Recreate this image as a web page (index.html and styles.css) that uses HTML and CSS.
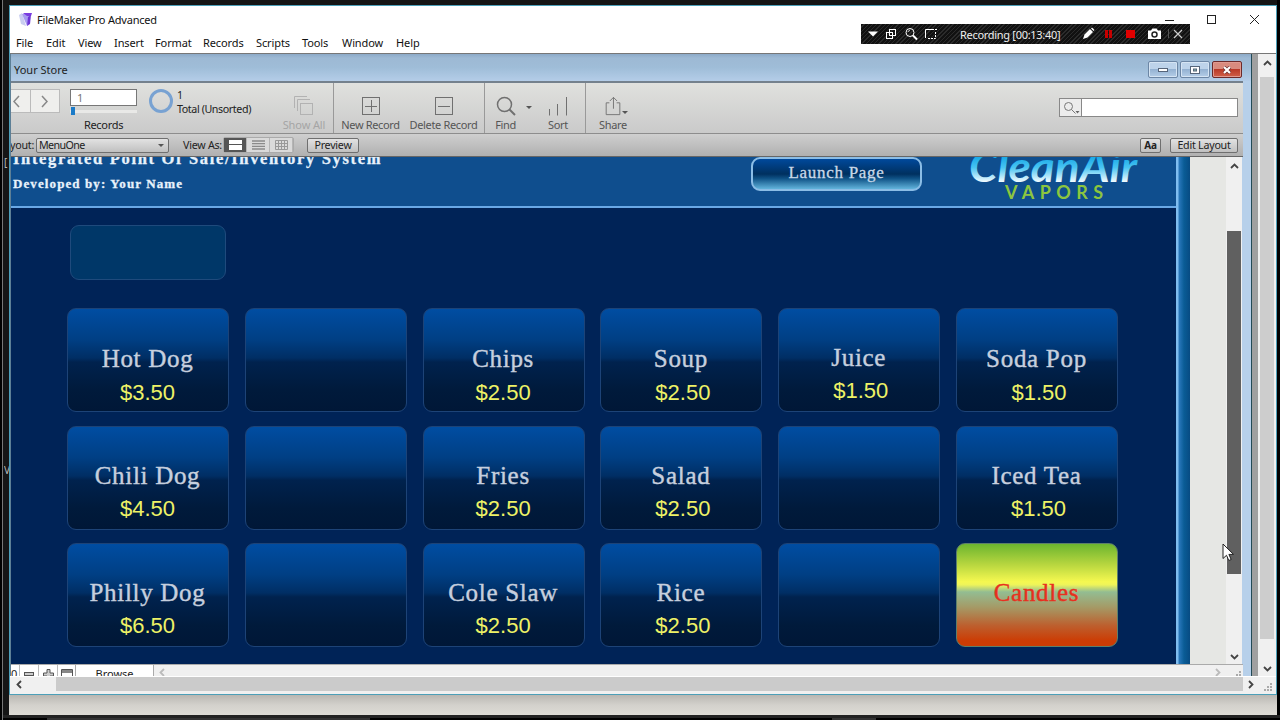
FILE: index.html
```html
<!doctype html>
<html lang="en">
<head>
    <meta charset="utf-8">
    <meta name="viewport" content="width=device-width, initial-scale=1">
    <title>FileMaker Pro Advanced</title>
    <link rel="stylesheet" href="styles.css">
</head>
<body>
    <div class="edge-mark">[</div>
    <div class="edge-mark edge-mark-low">V</div>

    <div class="app">
        <div class="app-title">
            <svg width="15" height="15" viewBox="0 0 15 15">
                <path d="M1 3l3-2 4 13-5-2z" fill="#c9cdf0"/>
                <path d="M4 2l9-1-4 13z" fill="#a79af0"/>
                <path d="M5 1l9 0-1 3-4 0z" fill="#7a3be0"/>
                <path d="M13 3l-1 9-3 2 1-9z" fill="#6b35d6"/>
            </svg>
            <span class="app-name">FileMaker Pro Advanced</span>
            <svg class="window-buttons" width="92" height="12" viewBox="0 0 92 12" fill="none" stroke="#222">
                <path d="M1 6.500h9"/>
                <rect x="43.500" y="1.500" width="8" height="8"/>
                <path d="M86 1l9 9M95 1l-9 9"/>
            </svg>
        </div>
        <div class="menu-bar">
            <span>File</span><span>Edit</span><span>View</span><span>Insert</span><span>Format</span><span>Records</span><span>Scripts</span><span>Tools</span><span>Window</span><span>Help</span>
        </div>

        <div class="workspace">
            <div class="child">
                <div class="child-title">
                    <span>Your Store</span>
                    <div class="child-buttons">
                        <div class="child-btn"><svg width="10" height="4"><rect x=".5" y=".5" width="9" height="3" fill="#fff" stroke="#56657a"/></svg></div>
                        <div class="child-btn"><svg width="10" height="8"><rect x=".5" y=".5" width="9" height="7" fill="#fff" stroke="#56657a"/><rect x="3.500" y="3" width="3" height="2" fill="#8ba" stroke="#56657a"/></svg></div>
                        <div class="child-btn child-close"><svg width="10" height="8" viewBox="0 0 10 8"><path d="M2 1l6 6M8 1l-6 6" stroke="#6d3030" stroke-width="3.600"/><path d="M2 1l6 6M8 1l-6 6" stroke="#fff" stroke-width="2.200"/></svg></div>
                    </div>
                </div>

                <div class="client">
                    <div class="toolbar">
                        <div class="nav">
                            <div class="nav-prev"><svg width="7" height="13" viewBox="0 0 7 13"><path d="M6 1L1 6.500l5 5.500"/></svg></div>
                            <div class="nav-next"><svg width="7" height="13" viewBox="0 0 7 13"><path d="M1 1l5 5.500L1 12"/></svg></div>
                        </div>
                        <div class="records">
                            <div class="record-no">1</div>
                            <div class="slider"><div class="slider-thumb"></div></div>
                            <span>Records</span>
                        </div>
                        <div class="ring"></div>
                        <div class="total">1<br>Total (Unsorted)</div>
                        <div class="tool tool-showall disabled">
                            <svg width="20" height="20" viewBox="0 0 20 20"><path d="M.5 12V.5H13M3.500 15V3.500H16"/><rect x="6.500" y="7.500" width="12" height="11"/></svg>
                            <span>Show All</span>
                        </div>
                        <div class="tool tool-new">
                            <svg width="20" height="20" viewBox="0 0 20 20"><rect x="1.500" y="1.500" width="17" height="17"/><path d="M4 10.500h12M10.500 4v12"/></svg>
                            <span>New Record</span>
                        </div>
                        <div class="tool tool-delete">
                            <svg width="20" height="20" viewBox="0 0 20 20"><rect x="1.500" y="1.500" width="17" height="17"/><path d="M4 10.500h12"/></svg>
                            <span>Delete Record</span>
                        </div>
                        <div class="tool tool-find">
                            <svg width="20" height="20" viewBox="0 0 20 20"><circle cx="8.500" cy="8.500" r="7" stroke-width="1.500"/><path d="M13.500 13.500l5.500 5.500" stroke-width="2"/></svg>
                            <span>Find</span>
                            <i class="drop"></i>
                        </div>
                        <div class="tool tool-sort">
                            <svg width="20" height="20" viewBox="0 0 20 20"><path d="M1.500 13v6.500M9.500 8v11.500M18.500 1v18.500"/></svg>
                            <span>Sort</span>
                        </div>
                        <div class="tool tool-share">
                            <svg width="20" height="22" viewBox="0 0 20 22"><path d="M6 7.500H2.500v13h15v-13H14M10.500 14V1.500M6.500 5.500l4-4 4 4"/></svg>
                            <span>Share</span>
                            <i class="drop"></i>
                        </div>
                        <div class="search">
                            <div class="search-icon"><svg width="17" height="14" viewBox="0 0 17 14"><circle cx="5.500" cy="5.500" r="4"/><path d="M8.500 8.500l4 4"/><path d="M12.500 10h4l-2 2.500z" fill="#666" stroke="none"/></svg></div>
                        </div>
                    </div>

                    <div class="layout-bar">
                        <span class="layout-label">Layout:</span>
                        <div class="layout-select">MenuOne<i class="drop"></i></div>
                        <span class="view-label">View As:</span>
                        <div class="views">
                            <div class="view-active"><svg width="13" height="10"><path d="M0 0h13v4H0zM0 5h13v5H0z" fill="#fff"/></svg></div>
                            <div><svg width="13" height="10"><path d="M0 1h13M0 3.700h13M0 6.300h13M0 9h13" stroke="#8a8a8a" stroke-width="1.300"/></svg></div>
                            <div><svg width="13" height="10"><path d="M.5.5h12v9H.5zM0 3.500h13M0 6.500h13M3.500 0v10M6.500 0v10M9.500 0v10" fill="none" stroke="#999"/></svg></div>
                        </div>
                        <div class="small-btn preview">Preview</div>
                        <div class="small-btn font-btn">Aa</div>
                        <div class="small-btn edit-btn">Edit Layout</div>
                    </div>

                    <div class="content">
                        <div class="form">
                            <div class="form-header">
                                <div class="headings">
                                    <h1>Integrated Point Of Sale/Inventory System</h1>
                                    <h2>Developed by: Your Name</h2>
                                </div>
                                <div class="launch">Launch Page</div>
                                <svg class="logo" width="180" height="49" viewBox="0 0 180 49">
                                    <defs>
                                        <linearGradient id="sky" gradientUnits="userSpaceOnUse" x1="0" y1="0" x2="0" y2="26">
                                            <stop offset="0" stop-color="#18a8e6"/>
                                            <stop offset=".4" stop-color="#48c4f2"/>
                                            <stop offset="1" stop-color="#fff"/>
                                        </linearGradient>
                                    </defs>
                                    <text class="logo-name" x="4" y="25" textLength="168" lengthAdjust="spacingAndGlyphs" fill="url(#sky)">CleanAir</text>
                                    <text class="logo-sub" x="40" y="42" textLength="98">VAPORS</text>
                                </svg>
                            </div>
                            <div class="blank-field"></div>
                            <div class="items">
                                <div class="item first-row"><b>Hot Dog</b><em>$3.50</em></div>
                                <div class="item"></div>
                                <div class="item first-row"><b>Chips</b><em>$2.50</em></div>
                                <div class="item first-row shift"><b>Soup</b><em>$2.50</em></div>
                                <div class="item shift"><b>Juice</b><em>$1.50</em></div>
                                <div class="item first-row shift-more"><b>Soda Pop</b><em>$1.50</em></div>
                                <div class="item"><b>Chili Dog</b><em>$4.50</em></div>
                                <div class="item"></div>
                                <div class="item"><b>Fries</b><em>$2.50</em></div>
                                <div class="item shift"><b>Salad</b><em>$2.50</em></div>
                                <div class="item"></div>
                                <div class="item shift"><b>Iced Tea</b><em>$1.50</em></div>
                                <div class="item"><b>Philly Dog</b><em>$6.50</em></div>
                                <div class="item"></div>
                                <div class="item"><b>Cole Slaw</b><em>$2.50</em></div>
                                <div class="item shift"><b>Rice</b><em>$2.50</em></div>
                                <div class="item"></div>
                                <div class="item candles"><b>Candles</b></div>
                            </div>
                        </div>
                        <div class="form-edge"></div>
                        <div class="gutter"></div>
                        <div class="inner-scroll">
                            <svg width="9" height="6" viewBox="0 0 9 6"><path d="M1 5l3.500-3.500L8 5"/></svg>
                            <div class="inner-thumb"></div>
                            <svg width="9" height="6" viewBox="0 0 9 6"><path d="M1 1l3.500 3.500L8 1"/></svg>
                        </div>
                    </div>

                    <div class="status-bar">
                        <div class="status-zoom">0</div>
                        <div class="status-cell"><svg width="10" height="10"><rect x=".5" y="3.500" width="9" height="3" fill="#ccc" stroke="#555"/></svg></div>
                        <div class="status-cell"><svg width="11" height="11"><path d="M4 .5h3V4h3.500v3H7v3.500H4V7H.5V4H4z" fill="#ccc" stroke="#555"/></svg></div>
                        <div class="status-cell status-pane"><svg width="12" height="11"><path d="M.5.5h11v10H.5z" fill="#fff" stroke="#555"/><path d="M1 2.500h10" stroke="#888" stroke-width="3"/></svg></div>
                        <div class="status-mode">Browse</div>
                        <svg class="status-left" width="6" height="9" viewBox="0 0 6 9"><path d="M5 1L1.500 4.500 5 8"/></svg>
                        <svg class="status-right" width="6" height="9" viewBox="0 0 6 9"><path d="M1 1l3.500 3.500L1 8"/></svg>
                        <svg class="grip" width="8" height="8"><path d="M6 0h2v2H6zM3 3h2v2H3zM6 3h2v2H6zM0 6h2v2H0zM3 6h2v2H3zM6 6h2v2H6z"/></svg>
                    </div>
                </div>
            </div>

            <div class="outer-scroll">
                <svg width="9" height="6" viewBox="0 0 9 6"><path d="M1 5l3.500-3.500L8 5"/></svg>
                <div class="outer-thumb"></div>
                <svg width="9" height="6" viewBox="0 0 9 6"><path d="M1 1l3.500 3.500L8 1"/></svg>
            </div>
        </div>

        <div class="bottom-scroll">
            <svg width="6" height="9" viewBox="0 0 6 9"><path d="M5 1L1.500 4.500 5 8"/></svg>
            <div class="bottom-thumb"></div>
            <svg width="6" height="9" viewBox="0 0 6 9"><path d="M1 1l3.500 3.500L1 8"/></svg>
            <svg class="grip" width="8" height="8"><path d="M6 0h2v2H6zM3 3h2v2H3zM6 3h2v2H6zM0 6h2v2H0zM3 6h2v2H3zM6 6h2v2H6z"/></svg>
        </div>
    </div>

    <div class="desk-strip"></div>
    <div class="taskbar"><div class="task-one"></div><div class="task-two"></div></div>

    <!-- screen recorder -->
    <div class="recorder">
        <svg class="rec-tools" width="72" height="14" viewBox="0 0 72 14" fill="none" stroke="#fff">
            <path d="M0 4.500h10L5 9.500z" fill="#fff" stroke="none"/>
            <rect x="21.500" y="2.500" width="6" height="6"/><rect x="18.500" y="5.500" width="6" height="6"/>
            <circle cx="42" cy="5.500" r="4"/><path d="M45 8.500l4 4" stroke-width="2"/><path d="M40 5a2 2 0 0 1 2-1.500" stroke-width=".7"/>
            <path d="M57.500 11V2.500H69M67.500 5v6.500H59" stroke-dasharray="2 1"/><path d="M57.500 11V2.500H64"/>
        </svg>
        <span>Recording [00:13:40]</span>
        <svg class="rec-actions" width="104" height="14" viewBox="0 0 104 14">
            <path d="M1 12l1.500-4.500L8 2l3 3-5.500 5.500z" fill="#fff"/>
            <path d="M9 1.500L10 .5l2.500 2.500-1 1z" fill="#fff"/>
            <path d="M23 3h3v8h-3zM27 3h3v8h-3z" fill="#c70000"/>
            <path d="M44 3h9v8h-9z" fill="#e00000"/>
            <path d="M66 3.500h3l1.500-2h4l1.500 2h3v8.500H66z" fill="#fff"/>
            <circle cx="72.500" cy="7.500" r="2.500" fill="#fff" stroke="#222" stroke-width="1.500"/>
            <path d="M86.500 2v9" stroke="#555"/>
            <path d="M92 3l8 8M100 3l-8 8" stroke="#ccc" stroke-width="1.200"/>
        </svg>
    </div>

    <svg class="cursor" width="13" height="19" viewBox="0 0 13 19">
        <path d="M1 1v14.500l3.500-3.200 2.300 5.200 2.400-1-2.300-5.100h4.600z" fill="#fff" stroke="#222"/>
    </svg>
</body>
</html>
```
FILE: styles.css
```css
* {
    box-sizing: border-box;
}

body {
    position: relative;
    margin: 0;
    width: 1280px;
    height: 720px;
    overflow: hidden;
    padding: 5px 3px 0 9px;
    background: linear-gradient(to right, #000 2px, #777 2px, #777 3px, #151515 3px, #151515 1277px, #000 1277px);
    font-family: "Noto Sans", "Open Sans", sans-serif;
    font-size: 11px;
    color: #222;
    white-space: nowrap;
}

svg {
    display: block;
    flex: none;
}

.edge-mark {
    position: absolute;
    left: 4px;
    top: 155px;
    width: 6px;
    overflow: hidden;
    color: #bbb;
    font-size: 10px;
}

.edge-mark-low {
    top: 463px;
}

/* main window */
.app {
    position: relative;
    height: 690px;
    border: 1px solid #4c9fb8;
    background: #fff;
    display: flex;
    flex-direction: column;
}

.app-title {
    height: 27px;
    display: flex;
    align-items: center;
    padding: 0 0 0 8px;
}

.app-name {
    margin-left: 4px;
    color: #111;
    letter-spacing: -0.2px;
}

.window-buttons {
    margin-left: auto;
    margin-right: 20px;
    overflow: visible;
}

.menu-bar {
    height: 20px;
    display: grid;
    grid-template-columns: 30px 32px 36px 41px 48px 53px 46px 40px 54px 30px;
    padding-left: 6px;
    line-height: 19px;
    color: #111;
    letter-spacing: -0.1px;
}

.workspace {
    height: 623px;
    border-top: 1px solid #777;
    background: #a0a0a0;
    display: flex;
    justify-content: space-between;
}

.child {
    width: 1242px;
    border-left: 1px solid #5d7f96;
    border-right: 1px solid #234a56;
    background: #b7d0ea;
    padding-right: 8px;
}

.child-title {
    height: 27px;
    margin-right: -8px;
    display: flex;
    align-items: center;
    justify-content: space-between;
    padding: 4px 9px 0 3px;
    background: linear-gradient(#8caac8, #9db9d4 15%, #9fbdd8 50%, #b4cde8);
}

.child-buttons {
    display: flex;
    gap: 2px;
}

.child-btn {
    width: 30px;
    height: 17px;
    border: 1px solid #6c86a5;
    border-radius: 2px;
    box-shadow: inset 0 0 0 1px #d5e4f3;
    background: linear-gradient(#bdd3ea 48%, #94b2d2 50%, #b5cee8);
    display: flex;
    align-items: center;
    justify-content: center;
}

.child-close {
    border-color: #6c2a2a;
    box-shadow: inset 0 0 0 1px #e09a90;
    background: linear-gradient(#d98b7e 48%, #b93a28 50%, #d0604a);
}

.client {
    height: 594px;
    border-top: 2px solid #74818d;
}

/* toolbar */
.toolbar {
    height: 50px;
    display: flex;
    background: linear-gradient(#e0e1de, #cacaca);
}

.nav {
    display: flex;
    width: 49px;
    height: 24px;
    margin-top: 6px;
    border: 1px solid #bbb;
    border-left: 0;
    background: #efefed;
}

.nav svg {
    fill: none;
    stroke: #888;
    stroke-width: 1.5;
}

.nav-prev {
    width: 20px;
    padding: 5px 0 0 2px;
    border-right: 1px solid #bbb;
}

.nav-next {
    padding: 5px 0 0 10px;
}

.records {
    width: 67px;
    margin: 6px 0 0 10px;
    text-align: center;
    line-height: 14px;
    letter-spacing: -0.3px;
}

.record-no {
    height: 17px;
    border: 1px solid #777;
    background: #fff;
    padding-left: 6px;
    text-align: left;
    color: #777;
    line-height: 16px;
}

.slider {
    height: 3px;
    margin: 4px 0 5px;
    background: #e9e9e7;
}

.slider-thumb {
    position: relative;
    top: -3px;
    left: 1px;
    width: 4px;
    height: 8px;
    background: #1b7bc8;
}

.ring {
    width: 24px;
    height: 24px;
    margin: 6px 0 0 12px;
    border: 3px solid #78a2d2;
    border-radius: 50%;
}

.total {
    width: 98px;
    margin: 6px 0 0 4px;
    line-height: 13.5px;
    font-size: 10.7px;
    letter-spacing: -0.4px;
}

.tool {
    position: relative;
    padding-top: 13px;
    text-align: center;
    line-height: 14px;
    color: #555;
    letter-spacing: -0.35px;
}

.tool svg {
    height: 20px;
    margin: 0 auto 2px;
    fill: none;
    stroke: #707070;
}

.tool-showall {
    width: 59px;
    border-right: 1px solid #999;
    letter-spacing: -0.1px;
}

.disabled {
    color: #a5a5a5;
}

.disabled svg {
    stroke: #b2b2b2;
}

.tool-new {
    width: 73px;
}

.tool-delete {
    width: 73px;
}

.tool-find {
    width: 51px;
    padding-right: 9px;
    margin-left: 4px;
    border-left: 1px solid #999;
}

.tool-sort {
    width: 51px;
    padding-right: 4px;
    border-right: 1px solid #999;
}

.tool-share {
    width: 54px;
}

.drop {
    border: 3px solid transparent;
    border-top-color: #555;
    border-bottom: 0;
}

.tool .drop {
    position: absolute;
    right: 3px;
    top: 23px;
}

.tool-share .drop {
    right: 12px;
    top: 28px;
}

.search {
    width: 179px;
    height: 19px;
    margin: 15px 5px 0 auto;
    border: 1px solid #888;
    background: #fff;
}

.search-icon {
    width: 22px;
    height: 17px;
    padding: 2px 0 0 3px;
    background: #ececec;
    border-right: 1px solid #888;
}

.search svg {
    fill: none;
    stroke: #777;
}

.layout-bar {
    height: 24px;
    display: flex;
    align-items: center;
    border-top: 1px solid #8d8d8d;
    border-bottom: 1px solid #666;
    background: linear-gradient(#cfcfcf, #b0b0b0);
    font-size: 10.7px;
    letter-spacing: -0.25px;
}

.layout-label {
    width: 25px;
    display: flex;
    justify-content: flex-end;
    overflow: hidden;
    padding-right: 2px;
}

.layout-select,
.small-btn {
    height: 15px;
    border: 1px solid #6f6f6f;
    border-radius: 2px;
    background: linear-gradient(#e2e2e2, #c0c0c0);
    line-height: 13px;
}

.layout-select {
    width: 133px;
    display: flex;
    align-items: center;
    justify-content: space-between;
    padding: 0 4px 0 2px;
    letter-spacing: -0.6px;
}

.view-label {
    margin-left: 14px;
    width: 40px;
}

.views {
    display: flex;
    height: 16px;
    border-radius: 2px;
    background: #dadada;
    border: 1px solid #aaa;
}

.views div {
    width: 23px;
    display: flex;
    align-items: center;
    justify-content: center;
    border-right: 1px solid #b5b5b5;
}

.views .view-active {
    background: #555;
}

.small-btn {
    text-align: center;
}

.preview {
    width: 52px;
    margin-left: 13px;
}

.font-btn {
    width: 21px;
    margin-left: auto;
    font-weight: bold;
    font-size: 10px;
}

.edit-btn {
    width: 68px;
    margin: 0 5px 0 9px;
}

/* layout content */
.content {
    height: 507px;
    display: flex;
}

.form {
    width: 1165px;
    background: #002357;
    font-family: "Liberation Serif", serif;
    overflow: hidden;
}

.form-header {
    height: 51px;
    display: flex;
    border-bottom: 2px solid #69a8e6;
    background: #0f4e8e;
}

.headings {
    width: 740px;
    padding-left: 2px;
    color: #e8f2fb;
}

h1 {
    margin: -9px 0 0;
    font-size: 16.5px;
    line-height: 21px;
    letter-spacing: 1.67px;
    -webkit-text-stroke: 0.3px #e8f2fb;
}

h2 {
    margin: 7px 0 0;
    font-size: 13px;
    line-height: 15px;
    letter-spacing: 1.1px;
    -webkit-text-stroke: 0.3px #e8f2fb;
}

.launch {
    width: 171px;
    height: 34px;
    border: 2px solid #8bbde6;
    border-radius: 9px;
    background: linear-gradient(#00499c, #00305f 50%, #0f5286 65%, #62b4dc);
    color: #c8d8e8;
    font-size: 17px;
    line-height: 28px;
    letter-spacing: 0.7px;
    text-align: center;
    -webkit-text-stroke: 0.3px #c8d8e8;
}

.logo {
    margin-left: 43px;
    font-family: Lato, sans-serif;
}

.logo-name {
    font-size: 42px;
    font-style: italic;
    font-weight: bold;
}

.logo-sub {
    font-size: 18px;
    font-weight: bold;
    fill: #8cc63f;
}

.blank-field {
    width: 156px;
    height: 55px;
    margin: 17px 0 0 59px;
    border: 1px solid #1f4a7c;
    border-radius: 9px;
    background: #003768;
}

.items {
    display: grid;
    grid-template-columns: repeat(6, 162px);
    grid-auto-rows: 104px;
    gap: 13.5px 15.8px;
    margin: 28px 0 0 56px;
}

.item {
    border: 1px solid #1d4377;
    border-radius: 9px;
    background: linear-gradient(#004da2, #003f84 30%, #002e64 48%, #00224e 52%, #001a3b 80%, #001737);
    text-align: center;
}

.item b {
    display: block;
    margin: 35px 0 0 -1px;
    color: #c6cfde;
    font-size: 25px;
    font-weight: normal;
    line-height: 28px;
    letter-spacing: 0.7px;
    -webkit-text-stroke: 0.4px #c6cfde;
}

.item em {
    display: block;
    margin: 6px 0 0 -1px;
    font-family: "Liberation Sans", Arial, sans-serif;
    font-size: 22px;
    font-style: normal;
    line-height: 25px;
    color: #eef266;
}

.first-row b {
    margin-top: 36px;
}

.first-row em {
    margin-top: 7px;
}

.shift em {
    margin-left: 3px;
}

.shift-more em {
    margin-left: 4px;
}

.candles {
    border-color: #5d7f6b;
    background: linear-gradient(#6cb52f, #b7d63f 20%, #f5f850 37%, #eef45a 40%, #93bd92 47%, #a59a66 62%, #bd5f2e 80%, #cc3c04 95%);
}

.candles b {
    color: #e8301e;
    -webkit-text-stroke-color: #e8301e;
}

.form-edge {
    width: 14px;
    background: linear-gradient(to right, #7fbdf0 2px, #2a78bd 3px, #0a5c96 8px, #074b83);
}

.gutter {
    width: 36px;
    background: #e6e7e4;
}

.inner-scroll,
.outer-scroll {
    width: 16px;
    display: flex;
    flex-direction: column;
    align-items: center;
    justify-content: space-between;
    padding: 6px 0 4px;
    background: #f0f0f0;
}

.inner-scroll svg,
.outer-scroll svg,
.bottom-scroll svg,
.status-bar .status-left,
.status-bar .status-right {
    fill: none;
    stroke: #444;
    stroke-width: 1.8;
}

.inner-thumb {
    width: 14px;
    height: 343px;
    margin-bottom: 18px;
    background: #606060;
}

.outer-scroll {
    width: 18px;
    padding: 6px 1px 4px;
}

.outer-thumb {
    width: 14px;
    height: 562px;
    margin: 11px 0 auto;
    background: #cdcdcd;
}

.status-bar {
    height: 12px;
    display: flex;
    overflow: hidden;
    background: #f0f0f0;
    border-top: 1px solid #aaa;
}

.status-zoom {
    width: 8px;
    background: #fff;
    line-height: 17px;
}

.status-cell {
    width: 19px;
    padding: 4px 0 0 4px;
    border-left: 1px solid #bbb;
    background: #fff;
}

.status-pane {
    width: 18px;
    padding-left: 3px;
}

.status-mode {
    width: 79px;
    border: 1px solid #aaa;
    border-width: 0 1px;
    background: #fff;
    text-align: center;
    line-height: 17px;
}

.status-bar .status-left {
    margin: 3px 0 0 5px;
    stroke: #bbb;
}

.status-bar .status-right {
    margin: 3px 12px 0 auto;
    stroke: #bbb;
}

.grip {
    fill: #aaa;
}

.status-bar .grip {
    margin: 6px 2px 0 0;
}

.bottom-scroll {
    height: 18px;
    display: flex;
    align-items: center;
    padding: 0 4px 3px 6px;
    background: #f0f0f0;
    border-top: 1px solid #fff;
}

.bottom-thumb {
    width: 1187px;
    height: 14px;
    margin: 0 5px 0 34px;
    background: #cbcbcb;
}

.bottom-scroll .grip {
    margin: 5px 0 0 auto;
    fill: #aaa;
    stroke: none;
}

.desk-strip {
    height: 20px;
    background: linear-gradient(#b9b7b2, #d3d1cc 50%, #dddbd5);
}

.taskbar {
    height: 5px;
    margin: 0 -3px 0 -6px;
    padding-top: 3px;
    display: flex;
    background: linear-gradient(#222 3px, #000 3px);
}

.task-one {
    width: 323px;
    margin-left: 44px;
    background: #333;
}

.task-two {
    width: 44px;
    margin-left: 462px;
    background: #333;
}

.recorder {
    position: absolute;
    left: 861px;
    top: 24px;
    width: 329px;
    height: 20px;
    display: flex;
    align-items: center;
    padding-left: 7px;
    background: repeating-linear-gradient(135deg, #111 0 2px, #2b2b2b 2px 3px);
    color: #eee;
}

.recorder span {
    width: 101px;
    margin-left: 20px;
    letter-spacing: -0.3px;
}

.rec-actions {
    margin-left: 21px;
}

.cursor {
    position: absolute;
    left: 1222px;
    top: 543px;
}
```
